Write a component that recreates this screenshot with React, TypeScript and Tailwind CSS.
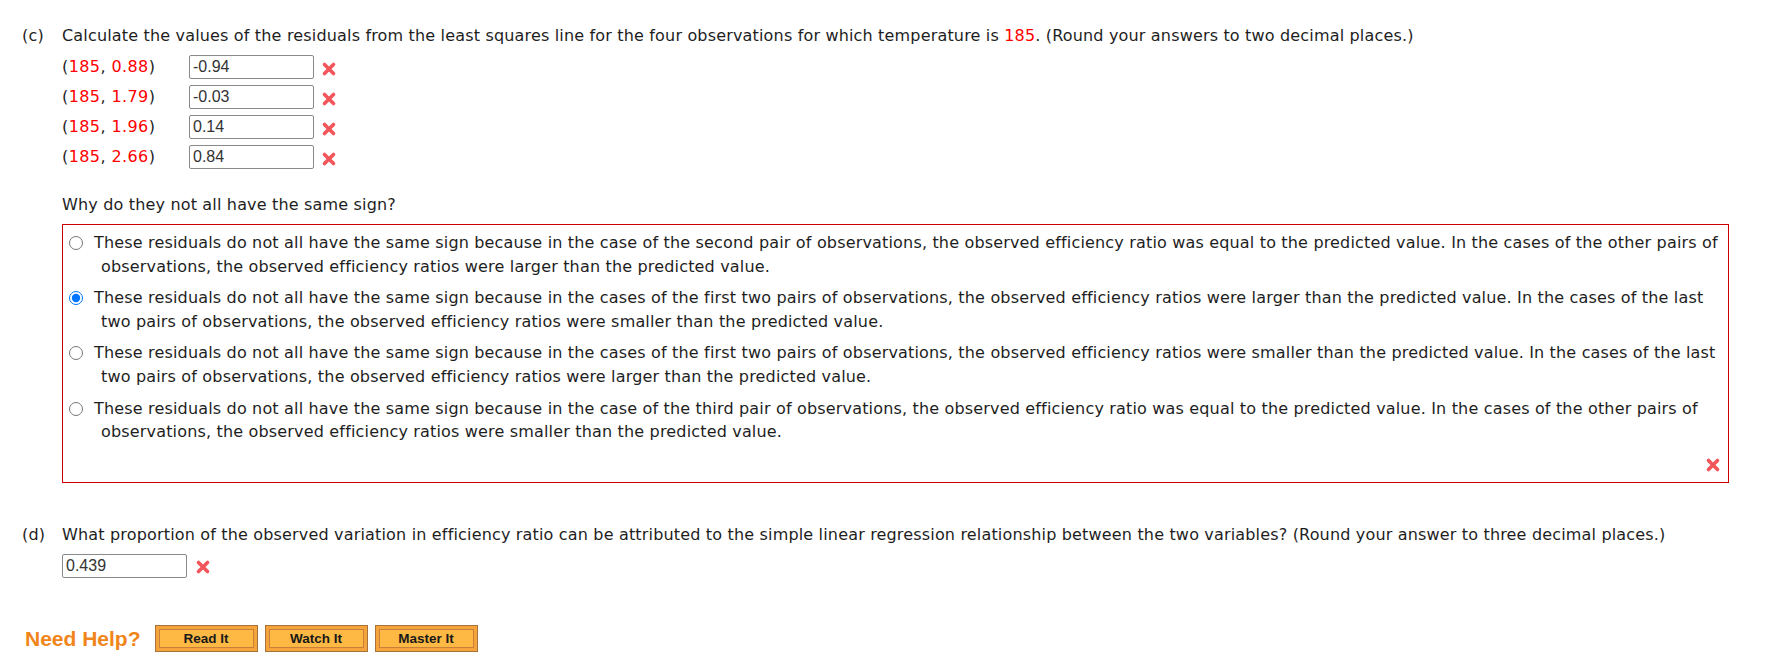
import React from 'react'

const verdana = { fontFamily: '"DejaVu Sans", Verdana, sans-serif' }
const arial = { fontFamily: '"Liberation Sans", Arial, sans-serif' }

function WrongMark({ className = '' }: { className?: string }) {
  return (
    <svg viewBox="0 0 16 16" className={`w-[16px] h-[16px] ${className}`}>
      <path d="M3.5 3.5 L12.5 12.5 M12.5 3.5 L3.5 12.5" stroke="#f2555a" strokeWidth="3.6" strokeLinecap="round" fill="none" />
    </svg>
  )
}

function AnswerBox({ value }: { value: string }) {
  return (
    <input
      readOnly
      value={value}
      className="w-[125px] h-[24px] border border-[#8a8a8a] rounded-[2px] pl-[3px] text-[16px] tracking-normal text-[#333] bg-white outline-none"
      style={arial}
    />
  )
}

const residuals = [
  { y: '0.88', value: '-0.94' },
  { y: '1.79', value: '-0.03' },
  { y: '1.96', value: '0.14' },
  { y: '2.66', value: '0.84' },
]

const choices = [
  'These residuals do not all have the same sign because in the case of the second pair of observations, the observed efficiency ratio was equal to the predicted value. In the cases of the other pairs of observations, the observed efficiency ratios were larger than the predicted value.',
  'These residuals do not all have the same sign because in the cases of the first two pairs of observations, the observed efficiency ratios were larger than the predicted value. In the cases of the last two pairs of observations, the observed efficiency ratios were smaller than the predicted value.',
  'These residuals do not all have the same sign because in the cases of the first two pairs of observations, the observed efficiency ratios were smaller than the predicted value. In the cases of the last two pairs of observations, the observed efficiency ratios were larger than the predicted value.',
  'These residuals do not all have the same sign because in the case of the third pair of observations, the observed efficiency ratio was equal to the predicted value. In the cases of the other pairs of observations, the observed efficiency ratios were smaller than the predicted value.',
]

function HelpButton({ label }: { label: string }) {
  return (
    <button className="w-[103px] h-[27px] border border-[#a8733a] bg-[#f4a43a] p-[3px] flex tracking-normal">
      <span
        className="flex-1 flex items-center justify-center border border-[#c9803a] bg-[#fdb944] text-[13.5px] font-bold text-[#1a1a1a] leading-none"
        style={arial}
      >
        {label}
      </span>
    </button>
  )
}

export default function App() {
  return (
    <div className="min-h-screen bg-white text-[#1e1e1e] text-[16px] tracking-[0.17px] pl-[22px] pt-[24px]" style={verdana}>
      {/* part (c) */}
      <div className="flex leading-[24px]">
        <span className="w-[40px] shrink-0">(c)</span>
        <span>
          Calculate the values of the residuals from the least squares line for the four observations for which temperature is{' '}
          <span className="text-[#ff0000]">185</span>. (Round your answers to two decimal places.)
        </span>
      </div>

      <div className="ml-[40px] mt-[7px] flex flex-col gap-[6px]">
        {residuals.map(r => (
          <div key={r.y} className="flex items-center h-[24px]">
            <span className="w-[127px] shrink-0 tracking-[0.4px]">
              (<span className="text-[#ff0000]">185</span>, <span className="text-[#ff0000]">{r.y}</span>)
            </span>
            <AnswerBox value={r.value} />
            <WrongMark className="ml-[7px] mt-[3px]" />
          </div>
        ))}
      </div>

      <div className="ml-[40px] mt-[24px] leading-[24px]">Why do they not all have the same sign?</div>

      <div className="ml-[40px] mt-[7px] w-[1667px] border border-[#cc0000] pt-[6px] pb-[9px]">
        <div className="flex flex-col gap-[8px]">
          {choices.map((c, i) => (
            <label key={i} className="block pl-[38px] pr-[10px] -indent-[32px] leading-[23.6px]">
              <input
                type="radio"
                name="sign"
                defaultChecked={i === 1}
                className="w-[14px] h-[14px] m-0 mr-[11px] align-[-2px] accent-[#0075ff]"
              />
              {c}
            </label>
          ))}
        </div>
        <div className="flex justify-end pr-[7px] mt-[13px]">
          <WrongMark />
        </div>
      </div>

      {/* part (d) */}
      <div className="flex leading-[24px] mt-[40px]">
        <span className="w-[40px] shrink-0">(d)</span>
        <span>
          What proportion of the observed variation in efficiency ratio can be attributed to the simple linear regression relationship between the two variables? (Round your answer to three decimal places.)
        </span>
      </div>
      <div className="ml-[40px] mt-[7px] flex items-center">
        <AnswerBox value="0.439" />
        <WrongMark className="ml-[8px] mt-[3px]" />
      </div>

      <div className="mt-[45px] flex items-center pb-[16px]">
        <span className="text-[21px] font-bold text-[#f0851a] ml-[3px] mr-[14px] tracking-normal" style={arial}>
          Need Help?
        </span>
        <div className="flex gap-[7px]">
          <HelpButton label="Read It" />
          <HelpButton label="Watch It" />
          <HelpButton label="Master It" />
        </div>
      </div>
    </div>
  )
}
